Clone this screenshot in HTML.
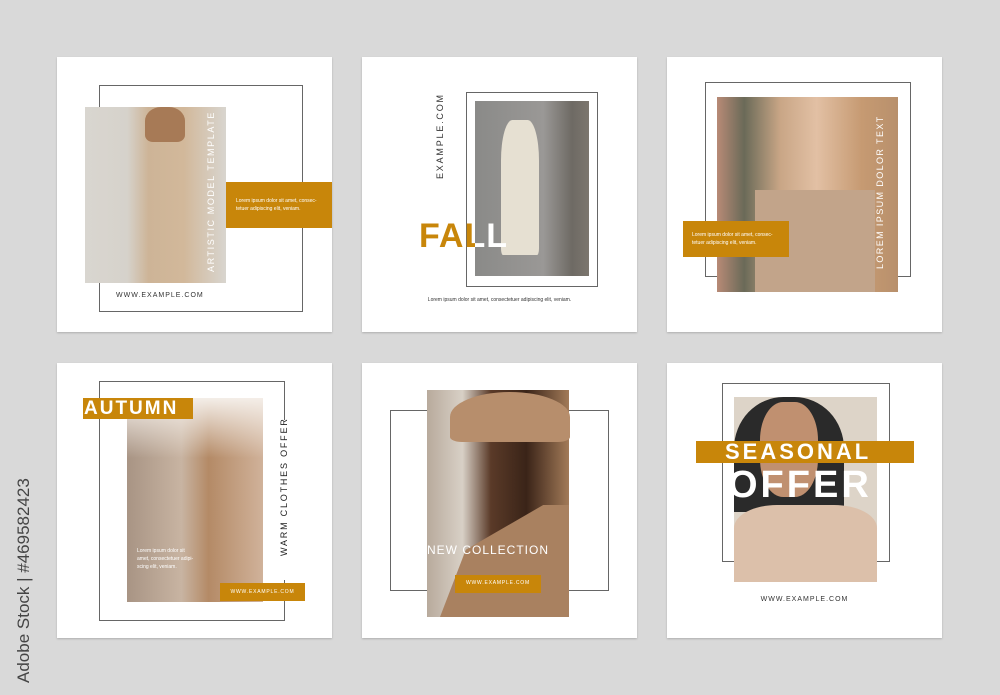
<!DOCTYPE html>
<html><head><style>
*{margin:0;padding:0;box-sizing:border-box}
body{width:1000px;height:695px;background:#d9d9d9;position:relative;overflow:hidden;font-family:"Liberation Sans",sans-serif}
.a{position:absolute}
.card{position:absolute;background:#fff;width:275px;height:275px;box-shadow:0 1px 2px rgba(0,0,0,.2)}
.fr{position:absolute;border:1px solid #666}
.or{position:absolute;background:#c8860a}
.vt{position:absolute;transform-origin:0 0;transform:rotate(-90deg);white-space:nowrap}
.fall{position:absolute;left:419px;top:219px;width:90px;font-size:34px;font-weight:bold;letter-spacing:1px;line-height:34px;white-space:nowrap}
</style></head><body>
<div class="vt" style="left:14px;top:683px;font-size:17px;color:#444;">Adobe Stock | #469582423</div>

<div class="card" style="left:57px;top:57px"></div>
<div class="card" style="left:362px;top:57px"></div>
<div class="card" style="left:667px;top:57px"></div>
<div class="card" style="left:57px;top:363px"></div>
<div class="card" style="left:362px;top:363px"></div>
<div class="card" style="left:667px;top:363px"></div>

<!-- card1 -->
<div class="fr" style="left:99px;top:85px;width:204px;height:227px"></div>
<div class="a" style="left:85px;top:107px;width:141px;height:176px;background:linear-gradient(90deg,#d9d6d0 0%,#d6d2cb 30%,#cdb497 45%,#d2b89a 70%,#d8d5cf 100%)"></div>
<div class="a" style="left:145px;top:107px;width:40px;height:35px;background:#a77a56;border-radius:40% 40% 20% 20%"></div>
<div class="or" style="left:226px;top:182px;width:106px;height:46px"></div>
<div class="a" style="left:236px;top:197px;font-size:5px;color:#fff;line-height:8px">Lorem ipsum dolor sit amet, consec-<br>tetuer adipiscing elit, veniam.</div>
<div class="vt" style="left:206px;top:272px;font-size:9px;color:#fff;letter-spacing:1.6px">ARTISTIC MODEL TEMPLATE</div>
<div class="a" style="left:116px;top:292px;font-size:7px;color:#333;letter-spacing:1px">WWW.EXAMPLE.COM</div>

<!-- card2 -->
<div class="fr" style="left:466px;top:92px;width:132px;height:195px"></div>
<div class="a" style="left:475px;top:101px;width:114px;height:175px;background:linear-gradient(90deg,#8a8a88 0%,#9a9896 60%,#6e6a64 85%,#7c766e 100%)"></div>
<div class="a" style="left:501px;top:120px;width:38px;height:135px;background:#e6e0d2;border-radius:30% 30% 5% 5%"></div>
<div class="vt" style="left:435px;top:179px;font-size:9px;color:#333;letter-spacing:1.8px">EXAMPLE.COM</div>
<div class="fall" style="color:#c8860a;clip-path:inset(4px 34px 4px 0)">FALL</div>
<div class="fall" style="color:#fff;clip-path:inset(4px 0 4px 56px)">FALL</div>
<div class="a" style="left:362px;top:297px;width:275px;text-align:center;font-size:5px;color:#333">Lorem ipsum dolor sit amet, consectetuer adipiscing elit, veniam.</div>

<!-- card3 -->
<div class="fr" style="left:705px;top:82px;width:206px;height:195px"></div>
<div class="a" style="left:717px;top:97px;width:181px;height:195px;background:linear-gradient(90deg,#b88a76 0%,#6a6a58 15%,#c9a686 35%,#e2c0a4 55%,#c69a72 80%,#b8906c 100%)"></div>
<div class="a" style="left:755px;top:190px;width:120px;height:102px;background:#c2a48a"></div>
<div class="or" style="left:683px;top:221px;width:106px;height:36px"></div>
<div class="a" style="left:692px;top:231px;font-size:5px;color:#fff;line-height:8px">Lorem ipsum dolor sit amet, consec-<br>tetuer adipiscing elit, veniam.</div>
<div class="vt" style="left:875px;top:269px;font-size:9px;color:#fff;letter-spacing:1.4px">LOREM IPSUM DOLOR TEXT</div>

<!-- card4 -->
<div class="fr" style="left:99px;top:381px;width:186px;height:240px"></div>
<div class="a" style="left:127px;top:398px;width:136px;height:204px;background:linear-gradient(90deg,#a89484 0%,#c8b4a2 40%,#b48a66 60%,#d0b29a 100%)"></div>
<div class="a" style="left:127px;top:398px;width:136px;height:60px;background:linear-gradient(#f4eee8,rgba(200,180,160,0))"></div>
<div class="a" style="left:265px;top:420px;width:40px;height:160px;background:#fff"></div>
<div class="or" style="left:83px;top:398px;width:110px;height:21px"></div>
<div class="a" style="left:84px;top:398px;font-size:19px;font-weight:bold;color:#fff;letter-spacing:2px;line-height:21px">AUTUMN</div>
<div class="vt" style="left:279px;top:556px;font-size:9px;color:#222;letter-spacing:1.8px">WARM CLOTHES OFFER</div>
<div class="a" style="left:137px;top:547px;font-size:5px;color:#fff;line-height:8px">Lorem ipsum dolor sit<br>amet, consectetuer adipi-<br>scing elit, veniam.</div>
<div class="or" style="left:220px;top:583px;width:85px;height:18px"></div>
<div class="a" style="left:220px;top:589px;width:85px;text-align:center;font-size:5px;color:#fff;letter-spacing:.8px">WWW.EXAMPLE.COM</div>

<!-- card5 -->
<div class="fr" style="left:390px;top:410px;width:219px;height:181px"></div>
<div class="a" style="left:427px;top:390px;width:142px;height:227px;background:linear-gradient(90deg,#b8aa9c 0%,#d8d0c6 25%,#5a3a28 45%,#3a2418 70%,#a27a58 100%)"></div>
<div class="a" style="left:450px;top:392px;width:120px;height:50px;background:#b78e6c;border-radius:50% 50% 10% 10%"></div>
<div class="a" style="left:440px;top:505px;width:129px;height:112px;background:#a98160;clip-path:polygon(20% 40%,80% 0,100% 0,100% 100%,0 100%)"></div>
<div class="a" style="left:427px;top:543px;width:150px;font-size:12px;color:#fff;letter-spacing:1px;white-space:nowrap;overflow:hidden">NEW COLLECTION</div>
<div class="or" style="left:455px;top:575px;width:86px;height:18px"></div>
<div class="a" style="left:455px;top:580px;width:86px;text-align:center;font-size:5px;color:#fff;letter-spacing:.8px">WWW.EXAMPLE.COM</div>

<!-- card6 -->
<div class="fr" style="left:722px;top:383px;width:168px;height:179px"></div>
<div class="a" style="left:734px;top:397px;width:143px;height:185px;background:#ddd4c8"></div>
<div class="a" style="left:734px;top:397px;width:110px;height:115px;background:#2a2a2a;border-radius:45% 45% 0 0"></div>
<div class="a" style="left:760px;top:402px;width:58px;height:95px;background:#c09070;border-radius:40%"></div>
<div class="a" style="left:734px;top:505px;width:143px;height:77px;background:#dcc0aa;border-radius:30% 30% 0 0"></div>
<div class="or" style="left:696px;top:441px;width:218px;height:22px"></div>
<div class="a" style="left:725px;top:440px;font-size:22px;font-weight:bold;color:#fff;letter-spacing:3px;line-height:24px">SEASONAL</div>
<div class="a" style="left:728px;top:463px;width:151px;font-size:38px;font-weight:bold;color:#fff;letter-spacing:3px;line-height:44px;white-space:nowrap;overflow:hidden">OFFER</div>
<div class="a" style="left:667px;top:596px;width:275px;text-align:center;font-size:7px;color:#333;letter-spacing:1px">WWW.EXAMPLE.COM</div>
</body></html>
